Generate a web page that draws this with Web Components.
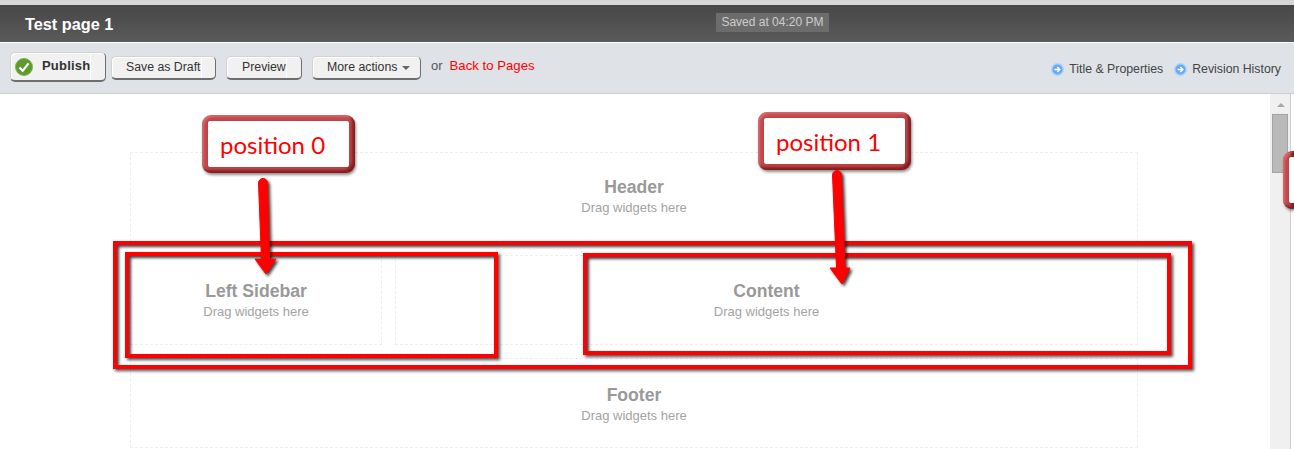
<!DOCTYPE html>
<html>
<head>
<meta charset="utf-8">
<title>Test page 1</title>
<style>
  html, body { margin: 0; height: 449px; overflow: hidden; background: #fff; font-family: "Liberation Sans", Arial, sans-serif; }
  body { display: flex; flex-direction: column; position: relative; }
</style>
</head>
<body>
  <title-bar heading="Test page 1" status="Saved at 04:20 PM"></title-bar>
  <action-toolbar>
    <tool-button primary seam slot="actions">Publish</tool-button>
    <tool-button seam slot="actions" width="105">Save as Draft</tool-button>
    <tool-button seam slot="actions" width="76" pad="15">Preview</tool-button>
    <tool-button menu slot="actions" width="109">More actions</tool-button>
    <info-link slot="links">Title &amp; Properties</info-link>
    <info-link slot="links">Revision History</info-link>
  </action-toolbar>
  <page-canvas>
    <drop-zone title="Header"></drop-zone>
    <zone-row>
      <drop-zone title="Left Sidebar" style="width:252px;padding-top:25px"></drop-zone>
      <drop-zone title="Content" style="flex:1;padding-top:25px"></drop-zone>
    </zone-row>
    <drop-zone title="Footer" style="padding-top:26px"></drop-zone>
  </page-canvas>

  <red-frame style="left:113px;top:241px;width:1079px;height:128px"></red-frame>
  <red-frame style="left:125px;top:252px;width:373px;height:106px"></red-frame>
  <red-frame style="left:583px;top:253px;width:588px;height:102px"></red-frame>
  <note-callout style="left:202px;top:115px">position 0</note-callout>
  <note-callout style="left:758px;top:112px">position 1</note-callout>
  <note-callout style="left:1283px;top:151px;width:11px;padding-right:0;border-radius:9px 0 0 9px"></note-callout>
  <arrow-mark d="M258.5 183a4.5 4.5 0 0 1 9 0L269.5 259H276L266 274L255 259H261.5Z"></arrow-mark>
  <arrow-mark d="M832.5 175a4.5 4.5 0 0 1 9 0L845 268H850L842 284L830 268H836.5Z"></arrow-mark>

<script>
class TitleBar extends HTMLElement {
  constructor() {
    super();
    this.attachShadow({ mode: 'open' });
  }
  connectedCallback() {
    this.shadowRoot.innerHTML = `
      <style>
        :host { display: block; flex: none; border-top: 5px solid #d6d6d6; border-bottom: 1px solid #fff; }
        .bar {
          height: 37px;
          display: flex;
          align-items: center;
          padding-left: 25px;
          background: linear-gradient(#474747, #5a5a5a);
        }
        h1 { margin: 2px 0 0; font-size: 16.3px; font-weight: bold; color: #fff; }
        .status {
          margin-left: 603px;
          margin-top: -2px;
          background: #6c6c6c;
          color: #ccc;
          font-size: 12px;
          line-height: 19px;
          padding-left: 5px;
          width: 108px;
        }
      </style>
      <div class="bar">
        <h1>${this.getAttribute('heading')}</h1>
        <div class="status">${this.getAttribute('status')}</div>
      </div>
    `;
  }
}

class ActionToolbar extends HTMLElement {
  constructor() {
    super();
    this.attachShadow({ mode: 'open' });
    this.shadowRoot.innerHTML = `
      <style>
        :host {
          display: flex;
          flex: none;
          height: 50px;
          background: #dfe2e6;
          border-bottom: 1px solid #cdcdcd;
          align-items: flex-start;
          justify-content: space-between;
          font-size: 13px;
          line-height: 20px;
          color: #555;
        }
        .left { display: flex; align-items: flex-start; padding: 13px 0 0 10px; }
        .or { margin-top: 0; }
        .back { margin-left: 7px; color: #f00; font-size: 13.2px; }
        .right { display: flex; gap: 11px; padding: 18px 13px 0 0; }
        ::slotted(tool-button) { margin-right: 10px; }
        ::slotted(tool-button[primary]) { margin: -4px 5px 0 0; }
      </style>
      <div class="left">
        <slot name="actions"></slot>
        <span class="or">or</span>
        <span class="back">Back to Pages</span>
      </div>
      <div class="right"><slot name="links"></slot></div>
    `;
  }
}

class ToolButton extends HTMLElement {
  constructor() {
    super();
    this.attachShadow({ mode: 'open' });
  }
  connectedCallback() {
    const primary = this.hasAttribute('primary');
    const menu = this.hasAttribute('menu');
    const seam = this.hasAttribute('seam');
    const width = primary ? 96 : this.getAttribute('width');
    const pad = primary ? 3 : (this.getAttribute('pad') || 14);
    this.shadowRoot.innerHTML = `
      <style>
        :host { display: block; }
        .btn {
          display: flex;
          align-items: center;
          box-sizing: border-box;
          height: ${primary ? 30 : 24}px;
          background: #f1f1f1;
          border: 1px solid #d2d2d2;
          border-right-color: #6e6e6e;
          border-bottom: 2px solid #6e6e6e;
          border-radius: 5px;
          box-shadow: inset 1px 1px 0 #fff;
          color: #333;
          font-size: 12.3px;
          line-height: 16px;
          white-space: nowrap;
        }
        .label { align-self: stretch; display: flex; align-items: center; padding-bottom: 2px; }
        .seam { border-right: 1px solid #fff; }
        .primary { font-weight: bold; font-size: 13px; letter-spacing: .2px; margin-left: 8px; }
        svg { flex: none; }
        .caret { width: 0; height: 0; margin: 0 0 0 5px; border: 4px solid transparent; border-top: 4px solid #666; border-bottom: 0; }
      </style>
      <div class="btn" style="width:${width}px;padding-left:${pad}px">
        ${primary ? `<svg width="20" height="20" viewBox="0 0 20 20"><circle cx="10" cy="10" r="8.5" fill="#5f9a2e" stroke="#7fb255" stroke-width="1"/><path d="M5.5 10.5l3.2 3.4 5.8-7.6" fill="none" stroke="#fff" stroke-width="2.2"/></svg>` : ''}
        <span class="label ${seam ? 'seam' : ''} ${primary ? 'primary' : ''}"><slot></slot></span>
        ${menu ? '<span class="caret"></span>' : ''}
      </div>
    `;
  }
}

class InfoLink extends HTMLElement {
  constructor() {
    super();
    this.attachShadow({ mode: 'open' });
    this.shadowRoot.innerHTML = `
      <style>
        :host { display: flex; align-items: flex-start; gap: 5px; color: #444; font-size: 12.3px; line-height: 14px; }
        span { margin-top: 1px; }
      </style>
      <svg width="13" height="15" viewBox="0 0 13 15">
        <circle cx="6.5" cy="8.5" r="6.5" fill="#a9d4ff"/>
        <circle cx="6.5" cy="8.5" r="5" fill="#68a9ef"/>
        <path d="M3.5 8.5h5M6.3 6l2.5 2.5-2.5 2.5" fill="none" stroke="#fff" stroke-width="1.5"/>
      </svg>
      <span><slot></slot></span>
    `;
  }
}

class PageCanvas extends HTMLElement {
  constructor() {
    super();
    this.attachShadow({ mode: 'open' });
    this.shadowRoot.innerHTML = `
      <style>
        :host { display: flex; flex: 1; min-height: 0; background: #fff; }
        .scroll { flex: 1; padding: 58px 132px 0 130px; display: flex; flex-direction: column; gap: 13px; min-width: 0; }
        .track { flex: none; width: 20px; background: #f0f0f0; display: flex; flex-direction: column; align-items: center; }
        .up { width: 0; height: 0; margin-top: 9px; border: 4px solid transparent; border-bottom: 4px solid #a8a8a8; border-top: 0; margin-left: 1px; }
        .thumb { box-sizing: border-box; width: 16px; height: 59px; margin-top: 7px; background: #bababa; border: 1px solid #a4a4a4; }
        .edge { flex: none; width: 4px; border-left: 1px solid #cfcfcf; box-sizing: border-box; background: #fff; }
      </style>
      <div class="scroll"><slot></slot></div>
      <div class="track"><div class="up"></div><div class="thumb"></div></div>
      <div class="edge"></div>
    `;
  }
}

class ZoneRow extends HTMLElement {
  constructor() {
    super();
    this.attachShadow({ mode: 'open' });
    this.shadowRoot.innerHTML = `
      <style>
        :host { display: flex; gap: 13px; }
      </style>
      <slot></slot>
    `;
  }
}

class DropZone extends HTMLElement {
  constructor() {
    super();
    this.attachShadow({ mode: 'open' });
  }
  connectedCallback() {
    this.shadowRoot.innerHTML = `
      <style>
        :host {
          display: block;
          box-sizing: border-box;
          height: 90px;
          flex: none;
          border: 1px dashed #eeeeee;
          text-align: center;
          padding-top: 24px;
        }
        .name { font-size: 17.6px; line-height: 20px; margin-bottom: 1px; font-weight: bold; color: #999; }
        .hint { font-size: 13px; line-height: 20px; color: #a3a3a3; }
      </style>
      <div class="name">${this.getAttribute('title')}</div>
      <div class="hint">Drag widgets here</div>
    `;
    this.removeAttribute('title');
  }
}

class RedFrame extends HTMLElement {
  constructor() {
    super();
    this.attachShadow({ mode: 'open' });
    this.shadowRoot.innerHTML = `
      <style>
        :host {
          position: absolute;
          box-sizing: border-box;
          border: 4px solid #f00;
          box-shadow: 2px 2px 3px rgba(0,0,0,.7), inset 2px 2px 3px rgba(0,0,0,.75);
        }
      </style>
    `;
  }
}

class NoteCallout extends HTMLElement {
  constructor() {
    super();
    this.attachShadow({ mode: 'open' });
    this.shadowRoot.innerHTML = `
      <style>
        :host {
          position: absolute;
          display: block;
          box-sizing: border-box;
          width: 153px;
          height: 58px;
          padding: 6px;
          border-radius: 9px;
          background: #c4474b;
          box-shadow: 1px 2px 3px rgba(0,0,0,.45), inset -3px -3px 3px rgba(90,0,0,.6), inset 2px 2px 2px rgba(255,255,255,.2);
        }
        .body {
          height: 46px;
          background: #fff;
          border-radius: 2px;
          box-shadow: 0 0 1px #7c1417;
          color: #f00;
          font: 24px/47px Lato, sans-serif;
          padding-left: 12px;
          white-space: nowrap;
        }
      </style>
      <div class="body"><slot></slot></div>
    `;
  }
}

class ArrowMark extends HTMLElement {
  constructor() {
    super();
    this.attachShadow({ mode: 'open' });
  }
  connectedCallback() {
    this.shadowRoot.innerHTML = `
      <style>
        :host { position: absolute; left: 0; top: 0; display: block; width: 1294px; height: 449px; pointer-events: none; }
        svg { display: block; filter: drop-shadow(2px 2px 1.5px rgba(0,0,0,.75)); }
      </style>
      <svg width="1294" height="449" viewBox="0 0 1294 449">
        <path d="${this.getAttribute('d')}" fill="#f00" stroke="#f00" stroke-width="1" stroke-linejoin="round"/>
      </svg>
    `;
  }
}

customElements.define('title-bar', TitleBar);
customElements.define('action-toolbar', ActionToolbar);
customElements.define('tool-button', ToolButton);
customElements.define('info-link', InfoLink);
customElements.define('page-canvas', PageCanvas);
customElements.define('zone-row', ZoneRow);
customElements.define('drop-zone', DropZone);
customElements.define('red-frame', RedFrame);
customElements.define('note-callout', NoteCallout);
customElements.define('arrow-mark', ArrowMark);
</script>
</body>
</html>
